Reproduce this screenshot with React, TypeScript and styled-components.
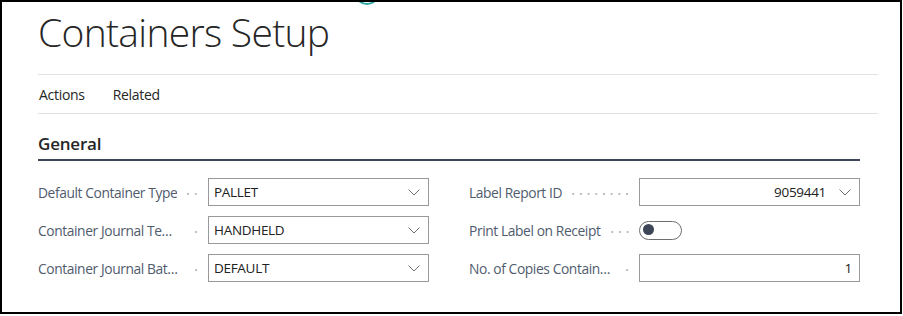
import React from 'react';
import styled, { createGlobalStyle } from 'styled-components';

const GlobalStyle = createGlobalStyle`
  body {
    margin: 0;
    background: #ffffff;
    font-family: 'Open Sans', 'Noto Sans', sans-serif;
  }
`;

const Frame = styled.div`
  position: relative;
  box-sizing: border-box;
  width: 902px;
  height: 314px;
  border: 2px solid #000000;
  background: #ffffff;
  overflow: hidden;
`;

const Ring = styled.div`
  position: absolute;
  left: 352px;
  top: -23px;
  width: 26px;
  height: 26px;
  box-sizing: border-box;
  border: 2px solid #2fa8a8;
  border-radius: 50%;
`;

const Header = styled.div`
  padding: 0 22px 0 36px;
`;

const Title = styled.h1`
  margin: 0;
  height: 72px;
  padding-top: 6px;
  box-sizing: border-box;
  font-size: 39px;
  line-height: 48px;
  font-weight: 300;
  color: #262626;
  letter-spacing: -0.7px;
`;

const ActionBar = styled.div`
  display: flex;
  align-items: center;
  gap: 28px;
  height: 38px;
  padding-left: 1px;
  border-top: 1px solid #e3e3e3;
  border-bottom: 1px solid #e3e3e3;
`;

const ActionItem = styled.span`
  font-size: 14px;
  letter-spacing: -0.3px;
  color: #262626;
`;

const Section = styled.section`
  width: 822px;
  margin: 0 0 0 36px;
`;

const SectionTitle = styled.h2`
  margin: 0;
  padding-top: 18px;
  height: 47px;
  box-sizing: border-box;
  font-size: 17px;
  line-height: 24px;
  font-weight: 600;
  letter-spacing: -0.2px;
  color: #262626;
  border-bottom: 2px solid #3c4656;
`;

const Fields = styled.div`
  display: grid;
  grid-template-columns: 391px 391px;
  column-gap: 40px;
  padding-top: 17px;
`;

const Column = styled.div`
  display: flex;
  flex-direction: column;
  gap: 10px;
`;

const Row = styled.div`
  display: flex;
  align-items: center;
  height: 28px;
`;

const Label = styled.div`
  display: flex;
  align-items: center;
  width: 170px;
  flex: none;
  padding-right: 8px;
  box-sizing: border-box;
`;

const LabelText = styled.span`
  max-width: 146px;
  white-space: nowrap;
  overflow: hidden;
  text-overflow: ellipsis;
  font-size: 13.8px;
  letter-spacing: -0.4px;
  color: #505c6d;
`;

const Leader = styled.span`
  flex: 1;
  height: 4px;
  margin-left: 6px;
  margin-top: 4px;
  background-image: radial-gradient(circle, #bcbcbc 0.7px, transparent 1px);
  background-size: 7.7px 4px;
  background-position: right center;
  background-repeat: repeat-x;
`;

const Box = styled.div<{ $align?: 'left' | 'right' }>`
  flex: 1;
  display: flex;
  align-items: center;
  justify-content: ${p => (p.$align === 'right' ? 'flex-end' : 'space-between')};
  gap: 13px;
  height: 28px;
  box-sizing: border-box;
  padding: 0 7px 0 5px;
  border: 1px solid #999999;
  background: #ffffff;
  font-size: 13.5px;
  letter-spacing: -0.3px;
  color: #212121;
`;

const Chevron = styled.svg`
  width: 12px;
  height: 7px;
  flex: none;
  margin-right: 1px;
`;

const Toggle = styled.div<{ $on?: boolean }>`
  position: relative;
  width: 43px;
  height: 19px;
  box-sizing: border-box;
  border: 1.5px solid #6e6e6e;
  border-radius: 10px;
  background: #ffffff;

  &::after {
    content: '';
    position: absolute;
    top: 2.5px;
    left: ${p => (p.$on ? '26px' : '3px')};
    width: 11px;
    height: 11px;
    border-radius: 50%;
    background: #3c4656;
  }
`;

const ChevronIcon = () => (
  <Chevron viewBox="0 0 12 7">
    <path d="M0.5 0.5 L6 6 L11.5 0.5" fill="none" stroke="#707070" strokeWidth="1" />
  </Chevron>
);

type Field = {
  label: string;
  value?: string;
  kind: 'select' | 'number' | 'toggle';
};

const leftFields: Field[] = [
  { label: 'Default Container Type', value: 'PALLET', kind: 'select' },
  { label: 'Container Journal Template Name', value: 'HANDHELD', kind: 'select' },
  { label: 'Container Journal Batch Name', value: 'DEFAULT', kind: 'select' },
];

const rightFields: Field[] = [
  { label: 'Label Report ID', value: '9059441', kind: 'number' },
  { label: 'Print Label on Receipt', kind: 'toggle' },
  { label: 'No. of Copies Container Label', value: '1', kind: 'number' },
];

const FieldRow = ({ field, lookup }: { field: Field; lookup?: boolean }) => (
  <Row>
    <Label>
      <LabelText title={field.label}>{field.label}</LabelText>
      <Leader />
    </Label>
    {field.kind === 'toggle' ? (
      <Toggle />
    ) : field.kind === 'number' ? (
      <Box $align="right">
        <span>{field.value}</span>
        {lookup && <ChevronIcon />}
      </Box>
    ) : (
      <Box>
        <span>{field.value}</span>
        <ChevronIcon />
      </Box>
    )}
  </Row>
);

const App = () => {
  return (
    <>
      <GlobalStyle />
      <Frame>
        <Ring />
        <Header>
          <Title>Containers Setup</Title>
          <ActionBar>
            <ActionItem>Actions</ActionItem>
            <ActionItem>Related</ActionItem>
          </ActionBar>
        </Header>
        <Section>
          <SectionTitle>General</SectionTitle>
          <Fields>
            <Column>
              {leftFields.map(f => (
                <FieldRow key={f.label} field={f} />
              ))}
            </Column>
            <Column>
              {rightFields.map((f, i) => (
                <FieldRow key={f.label} field={f} lookup={i === 0} />
              ))}
            </Column>
          </Fields>
        </Section>
      </Frame>
    </>
  );
};

export default App;
